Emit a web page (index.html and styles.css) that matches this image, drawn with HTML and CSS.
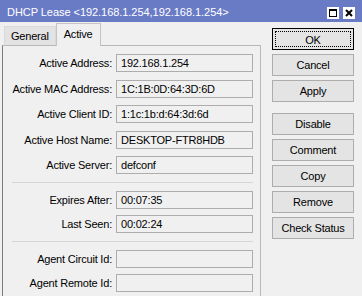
FILE: index.html
```html
<!DOCTYPE html>
<html lang="en">
<head>
    <meta charset="UTF-8">
    <meta name="viewport" content="width=device-width, initial-scale=1.0">
    <title>DHCP Lease</title>
    <link rel="stylesheet" href="styles.css">
</head>
<body>
    <div class="window">
        <div class="titlebar">
            <span class="title">DHCP Lease &lt;192.168.1.254,192.168.1.254&gt;</span>
            <div class="title-btns">
                <span class="tbtn">
                    <svg width="12" height="12" viewBox="0 0 12 12">
                        <rect x="2.5" y="2.5" width="7" height="7" fill="none" stroke="#000" stroke-width="1"/>
                        <rect x="2" y="2" width="8" height="2" fill="#000"/>
                    </svg>
                </span>
                <span class="tbtn">
                    <svg width="12" height="12" viewBox="0 0 12 12">
                        <path d="M3 3 L9 9 M9 3 L3 9" stroke="#000" stroke-width="2"/>
                    </svg>
                </span>
            </div>
        </div>

        <div class="content">
            <div class="tabs-area">
                <div class="tabs">
                    <span class="tab">General</span>
                    <span class="tab active">Active</span>
                </div>
                <div class="panel">
                    <div class="group group-main">
                        <label>Active Address:</label>
                        <div class="field">192.168.1.254</div>
                        <label>Active MAC Address:</label>
                        <div class="field">1C:1B:0D:64:3D:6D</div>
                        <label>Active Client ID:</label>
                        <div class="field">1:1c:1b:d:64:3d:6d</div>
                        <label>Active Host Name:</label>
                        <div class="field">DESKTOP-FTR8HDB</div>
                        <label>Active Server:</label>
                        <div class="field">defconf</div>
                    </div>
                    <div class="sep"></div>
                    <div class="group">
                        <label>Expires After:</label>
                        <div class="field">00:07:35</div>
                        <label>Last Seen:</label>
                        <div class="field">00:02:24</div>
                    </div>
                    <div class="sep"></div>
                    <div class="group">
                        <label>Agent Circuit Id:</label>
                        <div class="field"></div>
                        <label>Agent Remote Id:</label>
                        <div class="field"></div>
                    </div>
                </div>
            </div>

            <div class="actions">
                <button class="btn btn-default"><span>OK</span></button>
                <button class="btn">Cancel</button>
                <button class="btn">Apply</button>
                <button class="btn btn-spaced">Disable</button>
                <button class="btn">Comment</button>
                <button class="btn">Copy</button>
                <button class="btn">Remove</button>
                <button class="btn">Check Status</button>
            </div>
        </div>
    </div>
</body>
</html>
```

FILE: styles.css
```css
:root {
    --title-color: #6a7bc6;
    --background-color: #f0f0f0;
    --border-color: #adadad;
}

body {
    margin: 0;
    padding: 0;
    background: var(--background-color);
    font-family: 'Liberation Sans', Arial, sans-serif;
    font-size: 11px;
    letter-spacing: -0.2px;
    color: #000;
}

.window {
    width: 362px;
    height: 296px;
    overflow: hidden;
}

.titlebar {
    height: 22px;
    background: var(--title-color);
    display: flex;
    align-items: center;
    justify-content: space-between;
    padding: 0 7px 0 7px;
}

.title {
    color: #fff;
    font-size: 11px;
    letter-spacing: -0.05px;
    padding-top: 2px;
}

.title-btns {
    display: flex;
    gap: 4px;
    padding-top: 3px;
}

.tbtn {
    width: 12px;
    height: 12px;
    background: #fff;
    display: block;
}

.tbtn svg {
    display: block;
}

.content {
    display: flex;
    gap: 11px;
}

.tabs-area {
    width: 259px;
    margin-left: 2px;
}

.tabs {
    display: flex;
    align-items: flex-end;
    height: 23px;
    padding-left: 2px;
}

.tab {
    height: 18px;
    line-height: 18px;
    padding: 0 6px;
    background: #e3e3e3;
    border: 1px solid #d9d9d9;
    border-bottom: none;
}

.tab.active {
    height: 22px;
    line-height: 20px;
    padding: 0 7px;
    margin-bottom: -1px;
    background: var(--background-color);
    border-color: #c4c4c4;
    position: relative;
    z-index: 1;
}

.panel {
    box-sizing: border-box;
    height: 251px;
    border: 1px solid #b9b9b9;
    border-bottom: none;
    border-left-color: #7c7c7c;
    padding: 8px 7px 0 0;
}

.group {
    display: grid;
    grid-template-columns: 109px 1fr;
    column-gap: 4px;
    row-gap: 6px;
    align-items: center;
}

.group-main {
    row-gap: 7.5px;
}

.group label {
    text-align: right;
}

.field {
    height: 16px;
    line-height: 16px;
    border: 1px solid var(--border-color);
    padding: 0 4px;
    background: var(--background-color);
    white-space: nowrap;
    overflow: hidden;
}

.sep {
    height: 1px;
    background: #d5d5d5;
    margin: 8px 0 8px 9px;
}

.actions {
    display: flex;
    flex-direction: column;
    gap: 4px;
    width: 82px;
    padding-top: 6px;
}

.btn {
    height: 22px;
    padding: 0;
    font-family: inherit;
    font-size: 11px;
    letter-spacing: -0.2px;
    color: #000;
    background: #e4e4e4;
    border: 1px solid var(--border-color);
    border-radius: 0;
}

.btn-default {
    border-color: #000;
    padding: 2px;
}

.btn-default span {
    display: block;
    height: 100%;
    line-height: 16px;
    border: 1px dotted #000;
    box-sizing: border-box;
}

.btn-spaced {
    margin-top: 7px;
}
```
